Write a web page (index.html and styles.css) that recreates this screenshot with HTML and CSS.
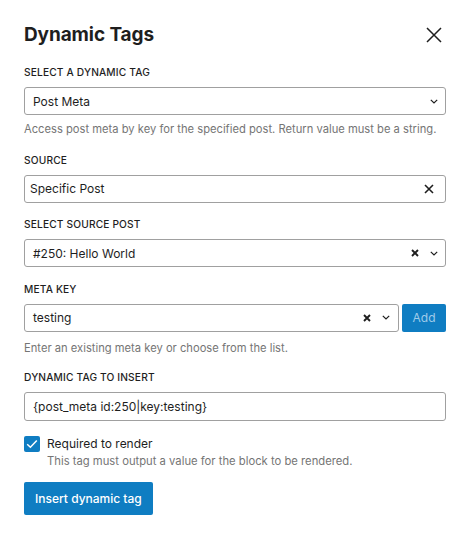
FILE: index.html
```html
<!DOCTYPE html>
<html>
<head>
<meta charset="utf-8">
<link rel="stylesheet" href="styles.css">
</head>
<body>
<div class="modal">
  <div class="header">
    <h1 class="title">Dynamic Tags</h1>
    <button class="close" aria-label="Close">
      <svg width="16" height="16" viewBox="0 0 16 16"><path d="M1 1L15 15M15 1L1 15" stroke="#1e1e1e" stroke-width="1.5" fill="none"/></svg>
    </button>
  </div>

  <div class="label first">Select a dynamic tag</div>
  <div class="control">
    <span class="value">Post Meta</span>
    <svg class="chev" width="8" height="5" viewBox="0 0 8 5"><path d="M0.8 0.8L4 4L7.2 0.8" stroke="#1e1e1e" stroke-width="1.2" fill="none"/></svg>
  </div>
  <div class="help">Access post meta by key for the specified post. Return value must be a string.</div>

  <div class="label">Source</div>
  <div class="control">
    <span class="value src">Specific Post</span>
    <svg class="xbig" width="10" height="10" viewBox="0 0 10 10"><path d="M1 1L9 9M9 1L1 9" stroke="#1e1e1e" stroke-width="1.6" fill="none"/></svg>
  </div>

  <div class="label">Select source post</div>
  <div class="control">
    <span class="value">#250: Hello World</span>
    <svg class="xsm" width="8" height="8" viewBox="0 0 8 8"><path d="M1 1L7 7M7 1L1 7" stroke="#1e1e1e" stroke-width="1.9" fill="none"/></svg>
    <svg class="chev" width="8" height="5" viewBox="0 0 8 5"><path d="M0.8 0.8L4 4L7.2 0.8" stroke="#1e1e1e" stroke-width="1.2" fill="none"/></svg>
  </div>

  <div class="label">Meta key</div>
  <div class="row">
    <div class="control grow">
      <span class="value">testing</span>
      <svg class="xsm" width="8" height="8" viewBox="0 0 8 8"><path d="M1 1L7 7M7 1L1 7" stroke="#1e1e1e" stroke-width="1.9" fill="none"/></svg>
      <svg class="chev" width="8" height="5" viewBox="0 0 8 5"><path d="M0.8 0.8L4 4L7.2 0.8" stroke="#1e1e1e" stroke-width="1.2" fill="none"/></svg>
    </div>
    <button class="add">Add</button>
  </div>
  <div class="help help2">Enter an existing meta key or choose from the list.</div>

  <div class="label">Dynamic tag to insert</div>
  <div class="control tall">
    <span class="value">{post_meta id:250|key:testing}</span>
  </div>

  <div class="check">
    <span class="box">
      <svg width="12" height="10" viewBox="0 0 12 10"><path d="M1.2 5.2L4.4 8.2L10.8 1.4" stroke="#fff" stroke-width="1.5" fill="none"/></svg>
    </span>
    <div class="check-text">
      <div class="check-label">Required to render</div>
      <div class="check-help">This tag must output a value for the block to be rendered.</div>
    </div>
  </div>

  <button class="primary">Insert dynamic tag</button>
</div>
</body>
</html>
```

FILE: styles.css
```css
* { box-sizing: border-box; }
html, body { margin: 0; background: #fff; }
body {
  font-family: Inter, "Noto Sans", "Liberation Sans", sans-serif;
  color: #1e1e1e;
}
.modal {
  width: 474px;
  padding: 23px 28px 0 24px;
  display: flex;
  flex-direction: column;
}
.header {
  display: flex;
  align-items: center;
  justify-content: space-between;
  height: 24px;
}
.title {
  margin: 0;
  font-size: 19px;
  line-height: 24px;
  font-weight: 650;
  letter-spacing: -0.1px;
}
.close {
  border: 0;
  background: none;
  padding: 0;
  margin-right: 4px;
  width: 16px;
  height: 16px;
  display: flex;
}
.label {
  font-size: 10.2px;
  line-height: 16px;
  font-weight: 500;
  text-transform: uppercase;
  letter-spacing: 0.15px;
  margin-top: 13.5px;
  margin-bottom: 7px;
}
.label.first { margin-top: 17px; }
.control {
  height: 28px;
  border: 1px solid #a0a0a0;
  border-radius: 3px;
  display: flex;
  align-items: center;
  padding: 0 7px 0 8px;
  font-size: 12px;
}
.control.tall { height: 29px; }
.value { flex: 1; padding-left: 0; }
.value.src { margin-left: -3px; }
.chev { margin-left: 11px; }
.xbig { margin-right: 4px; }
.help {
  font-size: 11.2px;
  line-height: 16px;
  color: #757575;
  margin-top: 6px;
  margin-bottom: 1px;
}
.help2 { margin-top: 8px; margin-bottom: 0; }
.row {
  display: flex;
  gap: 3px;
  height: 28px;
}
.grow { flex: 1; padding-right: 8px; }
.add {
  width: 44px;
  border: 0;
  border-radius: 2px;
  background: #0f7dc2;
  color: #9fcbea;
  font-family: inherit;
  font-size: 12px;
  padding: 0;
}
.check {
  display: flex;
  gap: 7px;
  margin-top: 15px;
}
.box {
  width: 16px;
  height: 16px;
  border-radius: 2px;
  background: #0f7dc2;
  display: flex;
  align-items: center;
  justify-content: center;
}
.check-label {
  font-size: 12px;
  line-height: 16px;
}
.check-help {
  font-size: 11.25px;
  line-height: 16px;
  color: #757575;
  margin-top: 1px;
}
.primary {
  align-self: flex-start;
  margin-top: 13px;
  height: 33px;
  padding: 0 11px;
  border: 0;
  border-radius: 2px;
  background: #0f7dc2;
  color: #fff;
  font-family: inherit;
  font-size: 12px;
  font-weight: 500;
}
```
